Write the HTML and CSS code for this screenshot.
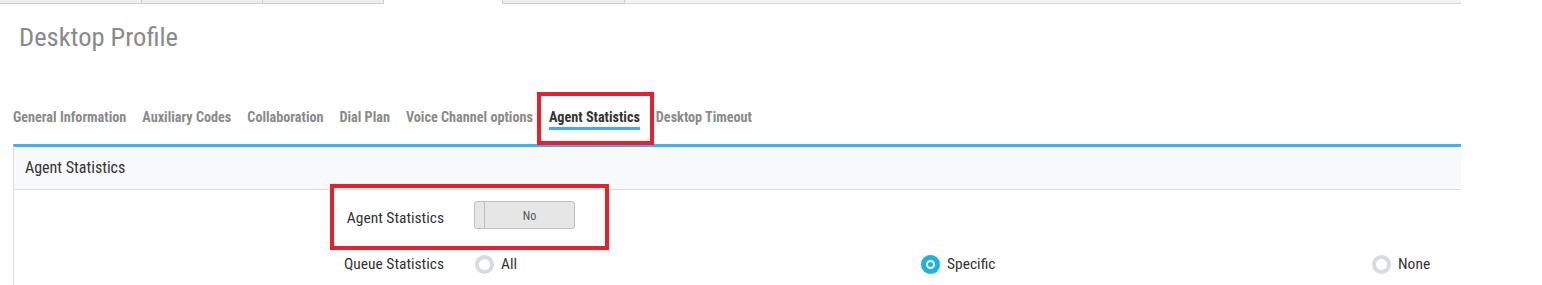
FILE: index.html
```html
<!DOCTYPE html>
<html lang="en">
<head>
<meta charset="utf-8">
<title>Desktop Profile</title>
<link rel="stylesheet" href="styles.css">
</head>
<body>
<div class="topbar">
  <div class="ttab w1"></div>
  <div class="ttab w2"></div>
  <div class="ttab w3"></div>
  <div class="ttab current"></div>
  <div class="ttab w5"></div>
  <div class="tfill"></div>
</div>

<h1 class="title">Desktop Profile</h1>

<nav class="tabs">
  <a class="tab">General Information</a>
  <a class="tab">Auxiliary Codes</a>
  <a class="tab">Collaboration</a>
  <a class="tab">Dial Plan</a>
  <a class="tab">Voice Channel options</a>
  <a class="tab active">Agent Statistics<span class="annot annot-tab"></span></a>
  <a class="tab">Desktop Timeout</a>
</nav>

<section class="panel">
  <div class="panel-head">Agent Statistics</div>
  <div class="panel-body">
    <div class="row row-toggle">
      <span class="annot annot-row"></span>
      <label class="label">Agent Statistics</label>
      <div class="toggle"><span class="knob"></span><span class="toggle-text">No</span></div>
    </div>
    <div class="row row-radio">
      <label class="label">Queue Statistics</label>
      <div class="radios">
        <div class="radio"><span class="dot"></span><span class="rtext">All</span></div>
        <div class="radio"><span class="dot on"></span><span class="rtext">Specific</span></div>
        <div class="radio"><span class="dot"></span><span class="rtext">None</span></div>
      </div>
    </div>
  </div>
</section>
</body>
</html>
```

FILE: styles.css
```css
* { box-sizing: border-box; }

body {
  margin: 0;
  background: #fff;
  font-family: "Roboto Condensed", Roboto, "Liberation Sans", sans-serif;
  color: #333;
  width: 1542px;
  height: 285px;
  overflow: hidden;
}

.topbar {
  display: flex;
  height: 4px;
  width: 1461px;
}
.ttab {
  height: 4px;
  background: #ededed;
  border-right: 1px solid #cfcfcf;
  border-bottom: 1px solid #cfcfcf;
}
.w1 { width: 142px; }
.w2 { width: 121px; }
.w3 { width: 121px; }
.current { width: 118px; background: #fff; border: none; }
.w5 { width: 123px; border-left: 1px solid #cfcfcf; }
.tfill {
  flex: 1;
  height: 4px;
  background: #f3f4f6;
  border-bottom: 1px solid #d3d6da;
}

.title {
  margin: 17px 0 0 19px;
  font-size: 26.5px;
  line-height: 31px;
  font-weight: 400;
  color: #898989;
}

.tabs {
  display: flex;
  gap: 16px;
  margin: 55px 0 0 13px;
}
.tab {
  position: relative;
  font-size: 14.2px;
  font-weight: 700;
  line-height: 20px;
  color: #8a8a8a;
  padding-bottom: 3px;
}
.tab.active {
  color: #333;
  border-bottom: 3px solid #42a9f4;
  padding-bottom: 0;
}

.annot {
  position: absolute;
  border: 4px solid #e8202a;
  pointer-events: none;
}
.annot-tab {
  left: -12px;
  right: -14px;
  top: -15px;
  bottom: -18px;
}

.panel {
  margin: 14px 0 0 13px;
  width: 1448px;
  border-top: 3px solid #45acf5;
  border-left: 1px solid #dcdcdc;
  height: 141px;
}
.panel-head {
  height: 43px;
  background: #f8f9fa;
  border-bottom: 1px solid #dcdcdc;
  display: flex;
  align-items: center;
  padding: 0 0 2px 11px;
  font-size: 16px;
  color: #333;
}

.panel-body {
  display: flex;
  flex-direction: column;
}
.row {
  position: relative;
  display: grid;
  grid-template-columns: 430px auto;
  column-gap: 30px;
  align-items: center;
}
.row-toggle { margin-top: 11px; height: 28px; }
.row-radio { margin-top: 25px; height: 20px; }

.label {
  text-align: right;
  font-size: 15.5px;
  color: #333;
}
.row-toggle .label { padding-top: 5px; }

.annot-row {
  left: 316px;
  width: 279px;
  top: -17px;
  bottom: -21px;
}

.toggle {
  width: 101px;
  height: 28px;
  border: 1px solid #bdbdbd;
  border-radius: 3px;
  background: #e6e6e6;
  display: flex;
  align-items: center;
}
.knob {
  width: 10px;
  height: 100%;
  border-right: 1px solid #bdbdbd;
}
.toggle-text {
  flex: 1;
  text-align: center;
  font-size: 12px;
  color: #555;
  padding-top: 1px;
}

.radios {
  display: grid;
  grid-template-columns: 446px 451px auto;
  margin-left: 1px;
}
.radio {
  display: flex;
  align-items: center;
  gap: 7px;
}
.dot {
  width: 19px;
  height: 19px;
  border-radius: 50%;
  border: 4px solid #d7dbde;
  background: #fff;
}
.dot.on {
  border: none;
  background: #1bb4dc;
  box-shadow: inset 0 0 0 5px #1bb4dc, inset 0 0 0 7px #fff;
}
.rtext {
  font-size: 15.5px;
  color: #333;
}
```
